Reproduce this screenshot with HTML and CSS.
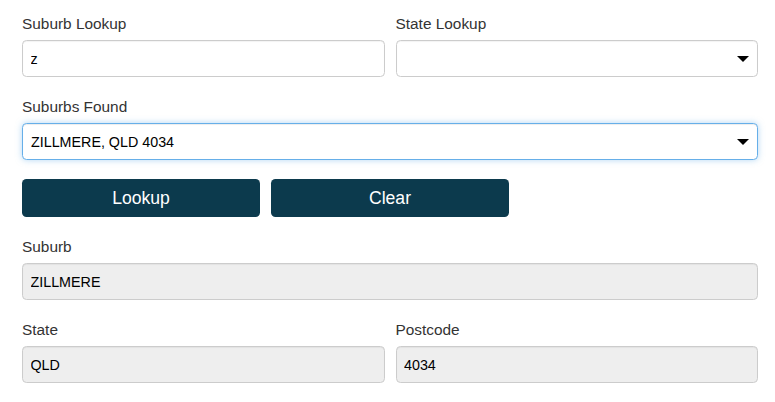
FILE: index.html
```html
<!DOCTYPE html>
<html lang="en">
<head>
<meta charset="utf-8">
<title>Suburb Lookup</title>
<link rel="stylesheet" href="styles.css">
</head>
<body>
<form class="form">
  <div class="row two">
    <div class="group">
      <label class="label" for="sl">Suburb Lookup</label>
      <input class="control" id="sl" type="text" value="z">
    </div>
    <div class="group">
      <label class="label" for="st">State Lookup</label>
      <div class="select-wrap">
        <select class="control select" id="st"><option></option></select>
      </div>
    </div>
  </div>
  <div class="row">
    <div class="group">
      <label class="label" for="sf">Suburbs Found</label>
      <div class="select-wrap">
        <select class="control select focused" id="sf"><option>ZILLMERE, QLD 4034</option></select>
      </div>
    </div>
  </div>
  <div class="row three">
    <button type="button" class="btn">Lookup</button>
    <button type="button" class="btn">Clear</button>
  </div>
  <div class="row">
    <div class="group">
      <label class="label" for="sb">Suburb</label>
      <input class="control readonly" id="sb" type="text" value="ZILLMERE" readonly>
    </div>
  </div>
  <div class="row two">
    <div class="group">
      <label class="label" for="ss">State</label>
      <input class="control readonly" id="ss" type="text" value="QLD" readonly>
    </div>
    <div class="group">
      <label class="label" for="pc">Postcode</label>
      <input class="control readonly" id="pc" type="text" value="4034" readonly>
    </div>
  </div>
</form>
</body>
</html>
```
FILE: styles.css
```css
html, body {
  margin: 0;
  padding: 0;
  background: #fff;
}

body {
  font-family: "Liberation Sans", Arial, sans-serif;
  color: #333;
}

.form {
  padding: 13.3px 17px 0 22px;
  display: flex;
  flex-direction: column;
  gap: 19.5px;
}

.row {
  display: grid;
  grid-template-columns: 1fr;
}

.row.two {
  grid-template-columns: 1fr 1fr;
  column-gap: 11px;
}

.row.three {
  grid-template-columns: 1fr 1fr 1fr;
  column-gap: 11px;
}

.group {
  display: flex;
  flex-direction: column;
  min-width: 0;
}

.label {
  display: block;
  font-size: 15.4px;
  line-height: 22px;
  margin-bottom: 5px;
  color: #333;
}

.control {
  box-sizing: border-box;
  width: 100%;
  height: 36.5px;
  margin: 0;
  padding: 0 8px 0 7.5px;
  font-family: "Liberation Sans", Arial, sans-serif;
  font-size: 14.3px;
  color: #000;
  background: #fff;
  border: 1px solid #ccc;
  border-radius: 4.5px;
  box-shadow: inset 0 1px 1px rgba(0, 0, 0, 0.05);
  outline: none;
}

.select {
  appearance: none;
  -webkit-appearance: none;
  padding-left: 8px;
  padding-right: 30px;
}

.select-wrap {
  position: relative;
}

.select-wrap::after {
  content: "";
  position: absolute;
  right: 9px;
  top: 50%;
  margin-top: -3px;
  width: 0;
  height: 0;
  border-left: 6px solid transparent;
  border-right: 6px solid transparent;
  border-top: 6px solid #000;
  pointer-events: none;
}

.focused {
  border-color: #66afe9;
  box-shadow: inset 0 1px 1px rgba(0, 0, 0, 0.075), 0 0 6px rgba(102, 175, 233, 0.5);
}

.readonly {
  background: #eee;
}

.btn {
  height: 37.7px;
  margin: 0;
  padding: 0;
  border: none;
  border-radius: 4.5px;
  background: #0c3a4d;
  color: #fff;
  font-family: "Liberation Sans", Arial, sans-serif;
  font-size: 17.6px;
  cursor: pointer;
}
```
